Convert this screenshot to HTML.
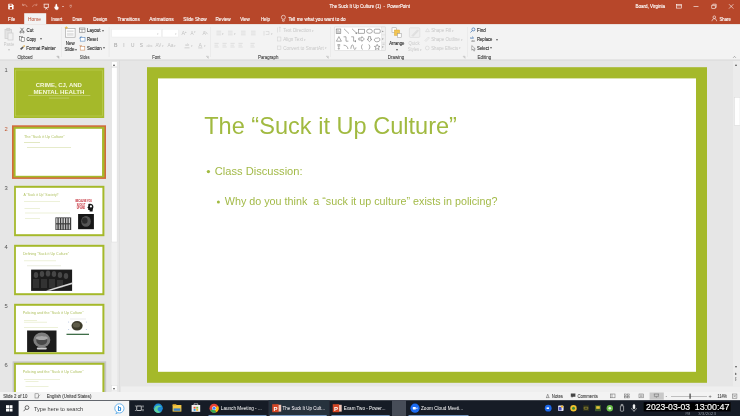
<!DOCTYPE html>
<html><head><meta charset="utf-8"><title>The Suck It Up Culture (1) - PowerPoint</title>
<style>
html,body{margin:0;padding:0;background:#E6E6E6;overflow:hidden}
svg{display:block;font-family:"Liberation Sans",sans-serif}
text{white-space:pre}
</style></head><body>
<svg width="740" height="416" viewBox="0 0 740 416">
<defs><filter id="soft" filterUnits="userSpaceOnUse" x="-10" y="-10" width="760" height="436"><feGaussianBlur stdDeviation="0.45"/></filter></defs>
<g filter="url(#soft)">
<rect x="-10" y="-10" width="760" height="436" fill="#E6E6E6" />
<rect x="-10" y="-10" width="760" height="34.3" fill="#B7472A" />
<rect x="-10" y="24.3" width="760" height="35.5" fill="#F3F3F3" />
<rect x="-10" y="59.6" width="760" height="0.8" fill="#d4d4d4" />
<text x="329.5" y="7.9" font-size="4.9" fill="#fff" textLength="80.5" lengthAdjust="spacingAndGlyphs" stroke="#fff" stroke-width="0.12">The Suck It Up Culture (1)  -  PowerPoint</text>
<text x="635.5" y="7.9" font-size="4.9" fill="#fff" textLength="29.5" lengthAdjust="spacingAndGlyphs" stroke="#fff" stroke-width="0.12">Board, Virginia</text>
<g stroke="#fff" stroke-width="0.6" fill="none"><rect x="676.5" y="4.5" width="5" height="3.6"/><path d="M676.5 5.7h5"/><path d="M693.5 6.5h5"/><rect x="711.8" y="5.2" width="3.4" height="3.2"/><path d="M712.8 5.2v-1h3.4v3.2h-1"/><path d="M729 4.2l4.4 4.4M733.4 4.2l-4.4 4.4"/></g>
<g fill="none" stroke="#fff" stroke-width="0.7"><path d="M8.6 4.2h3.6l1 1v3.9h-4.6z" fill="#fff"/><rect x="9.6" y="4.4" width="2" height="1.4" fill="#B7472A" stroke="none"/><rect x="9.8" y="7" width="2.2" height="2" fill="#B7472A" stroke="none"/><path d="M22.5 5.2c2-1 4-.6 4.6 1.8M22.5 5.2l.2-1.5M22.5 5.2l1.6.4" stroke="#e0a595"/><path d="M37 5.2c-2-1-4-.6-4.600 1.800M37 5.200l-.2-1.500M37 5.200l-1.600.4" stroke="#d98f7d"/><path d="M43.700 4.200h5.200M44.200 4.200v3.400h4.200v-3.400M46.300 7.600v1.400M45 9.400l1.300-1 1.300 1" /><path d="M56 4c.8 0 1 .5 1 1.200v1.300l1.300.5v1.600c0 .8-.6 1.200-1.400 1.200s-1.600-.4-2-1.400l-.6-1.500.8.300z" fill="#fff" stroke-width="0.3"/><path d="M62 6l1 1 1-1" stroke-width="0.5"/><path d="M69.600 5.300h2.200M69.900 6.500l.8.900.8-.9" stroke-width="0.5"/></g>
<rect x="24.2" y="13.2" width="22" height="11.2" fill="#F3F3F3" />
<text x="8" y="20.6" font-size="4.9" fill="#fff" textLength="7.2" lengthAdjust="spacingAndGlyphs" stroke="#fff" stroke-width="0.12">File</text>
<text x="51.3" y="20.6" font-size="4.9" fill="#fff" textLength="10.8" lengthAdjust="spacingAndGlyphs" stroke="#fff" stroke-width="0.12">Insert</text>
<text x="72.5" y="20.6" font-size="4.9" fill="#fff" textLength="9.6" lengthAdjust="spacingAndGlyphs" stroke="#fff" stroke-width="0.12">Draw</text>
<text x="93.2" y="20.6" font-size="4.9" fill="#fff" textLength="14.2" lengthAdjust="spacingAndGlyphs" stroke="#fff" stroke-width="0.12">Design</text>
<text x="117.5" y="20.6" font-size="4.9" fill="#fff" textLength="22.2" lengthAdjust="spacingAndGlyphs" stroke="#fff" stroke-width="0.12">Transitions</text>
<text x="149.3" y="20.6" font-size="4.9" fill="#fff" textLength="24.3" lengthAdjust="spacingAndGlyphs" stroke="#fff" stroke-width="0.12">Animations</text>
<text x="183.3" y="20.6" font-size="4.9" fill="#fff" textLength="23.4" lengthAdjust="spacingAndGlyphs" stroke="#fff" stroke-width="0.12">Slide Show</text>
<text x="215.5" y="20.6" font-size="4.9" fill="#fff" textLength="15.2" lengthAdjust="spacingAndGlyphs" stroke="#fff" stroke-width="0.12">Review</text>
<text x="240.2" y="20.6" font-size="4.9" fill="#fff" textLength="9.6" lengthAdjust="spacingAndGlyphs" stroke="#fff" stroke-width="0.12">View</text>
<text x="261" y="20.6" font-size="4.9" fill="#fff" textLength="8.8" lengthAdjust="spacingAndGlyphs" stroke="#fff" stroke-width="0.12">Help</text>
<text x="28" y="20.6" font-size="4.9" fill="#B7472A" textLength="13" lengthAdjust="spacingAndGlyphs" >Home</text>
<text x="288.4" y="20.6" font-size="4.9" fill="#fff" textLength="57.3" lengthAdjust="spacingAndGlyphs" stroke="#fff" stroke-width="0.12">Tell me what you want to do</text>
<g fill="none" stroke="#fff" stroke-width="0.6"><circle cx="283.400" cy="17.300" r="2"/><path d="M282.600 19.600v1.600h1.600v-1.600"/></g>
<text x="719.5" y="20.6" font-size="4.9" fill="#fff" textLength="11.4" lengthAdjust="spacingAndGlyphs" stroke="#fff" stroke-width="0.12">Share</text>
<g fill="none" stroke="#fff" stroke-width="0.6"><circle cx="714.300" cy="17.200" r="1.300"/><path d="M712 21.200c0-1.600 1-2.500 2.300-2.500s2.300.9 2.300 2.500"/></g>
<rect x="61.5" y="27" width="0.5" height="30" fill="#e2e2e2" />
<rect x="108.8" y="27" width="0.5" height="30" fill="#e2e2e2" />
<rect x="210.5" y="27" width="0.5" height="30" fill="#e2e2e2" />
<rect x="330.2" y="27" width="0.5" height="30" fill="#e2e2e2" />
<rect x="467" y="27" width="0.5" height="30" fill="#e2e2e2" />
<g fill="none" stroke="#cfcfcf" stroke-width="0.8"><rect x="5" y="29.500" width="6.500" height="9" fill="#e4e4e4"/><rect x="6.800" y="28.300" width="3" height="2" fill="#d8d8d8"/><rect x="8" y="33" width="5" height="7" fill="#f0f0f0"/></g>
<text x="3.8" y="45.6" font-size="4.9" fill="#c6c6c6" textLength="10.5" lengthAdjust="spacingAndGlyphs" >Paste</text>
<text x="7.8" y="50.6" font-size="4" fill="#c6c6c6" >▾</text>
<g fill="none" stroke="#444" stroke-width="0.6"><path d="M20.500 27.800l3 3.600M23.500 27.800l-3 3.600"/><circle cx="20.600" cy="32.100" r=".8"/><circle cx="23.400" cy="32.100" r=".8"/></g>
<text x="26.4" y="31.7" font-size="4.9" fill="#262626" textLength="7" lengthAdjust="spacingAndGlyphs" stroke="#262626" stroke-width="0.1" >Cut</text>
<g fill="#fff" stroke="#555" stroke-width="0.5"><rect x="19.600" y="36.300" width="3" height="3.800"/><rect x="21.200" y="37.600" width="3" height="3.800"/></g>
<text x="26.4" y="40.7" font-size="4.9" fill="#262626" textLength="9.8" lengthAdjust="spacingAndGlyphs" stroke="#262626" stroke-width="0.1" >Copy</text>
<text x="40" y="40.4" font-size="3.6" fill="#666" >▾</text>
<g><path d="M20 48.800l2.600-2.400 1.200 1.200-2.600 2.400z" fill="#555"/><path d="M22.800 46.200l1.400-1.300 1 1-1.300 1.400z" fill="#e0b050"/></g>
<text x="26.2" y="49.6" font-size="4.9" fill="#262626" textLength="29.6" lengthAdjust="spacingAndGlyphs" stroke="#262626" stroke-width="0.1" >Format Painter</text>
<text x="17.4" y="58.8" font-size="4.9" fill="#444" textLength="15.2" lengthAdjust="spacingAndGlyphs" stroke="#444" stroke-width="0.1" >Clipboard</text>
<path d="M56.800 56.300h2v2M58.800 58.300l-1.700-1.700" stroke="#777" stroke-width="0.4" fill="none"/>
<g><rect x="65.300" y="28.600" width="9.800" height="8.600" fill="#fff" stroke="#999" stroke-width="0.6"/><rect x="66.800" y="30.600" width="6.800" height="1" fill="#c9c9c9"/><rect x="66.800" y="32.800" width="6.800" height="3" fill="#e3e3e3"/><path d="M64.800 27.600h3M66.300 26.300v2.800" stroke="#e8b84a" stroke-width="0.9"/></g>
<text x="65.8" y="45" font-size="4.9" fill="#262626" textLength="8.8" lengthAdjust="spacingAndGlyphs" stroke="#262626" stroke-width="0.1" >New</text>
<text x="64.4" y="51.2" font-size="4.9" fill="#262626" textLength="10" lengthAdjust="spacingAndGlyphs" stroke="#262626" stroke-width="0.1" >Slide</text>
<text x="75" y="51" font-size="3.6" fill="#666" >▾</text>
<g fill="#fff" stroke="#666" stroke-width="0.5"><rect x="79.600" y="28" width="5.400" height="4.200"/><path d="M79.600 29.300h5.400M82 29.300v2.900"/></g>
<text x="87" y="31.7" font-size="4.9" fill="#262626" textLength="13.6" lengthAdjust="spacingAndGlyphs" stroke="#262626" stroke-width="0.1" >Layout</text>
<text x="101.6" y="31.5" font-size="3.6" fill="#666" >▾</text>
<g fill="#fff" stroke="#3a73b5" stroke-width="0.5"><rect x="80.200" y="37.300" width="4.800" height="3.800"/><path d="M79.400 38.600c.4-1.600 1.600-2 2.800-1.800" fill="none"/></g>
<text x="87" y="40.7" font-size="4.9" fill="#262626" textLength="10.8" lengthAdjust="spacingAndGlyphs" stroke="#262626" stroke-width="0.1" >Reset</text>
<g fill="#fff" stroke="#c87f4a" stroke-width="0.5"><rect x="80.200" y="46.300" width="4.600" height="3.800"/><path d="M79.400 45.600h2.600"/></g>
<text x="87" y="49.6" font-size="4.9" fill="#262626" textLength="14.6" lengthAdjust="spacingAndGlyphs" stroke="#262626" stroke-width="0.1" >Section</text>
<text x="102.6" y="49.4" font-size="3.6" fill="#666" >▾</text>
<text x="79.8" y="58.8" font-size="4.9" fill="#444" textLength="9.6" lengthAdjust="spacingAndGlyphs" stroke="#444" stroke-width="0.1" >Slides</text>
<rect x="111.8" y="29.2" width="49.6" height="7.8" fill="#fff" stroke="#e6e6e6" stroke-width="0.4"/>
<rect x="162.3" y="29.2" width="16.2" height="7.8" fill="#fff" stroke="#e6e6e6" stroke-width="0.4"/>
<text x="157.3" y="34.8" font-size="3.4" fill="#cfcfcf" >▾</text>
<text x="174.6" y="34.8" font-size="3.4" fill="#cfcfcf" >▾</text>
<text x="181.6" y="35" font-size="5.4" fill="#c4c4c4" >A</text>
<text x="185.2" y="32.8" font-size="2.6" fill="#c4c4c4" >▴</text>
<text x="190.6" y="35" font-size="4.6" fill="#c4c4c4" >A</text>
<text x="193.6" y="32.8" font-size="2.6" fill="#c4c4c4" >▾</text>
<text x="202.6" y="35" font-size="5" fill="#c4c4c4" >A</text>
<path d="M205.300 31.500l2.200 2.600" stroke="#d0d0d0" stroke-width="1"/>
<text x="114" y="47" font-size="4.8" fill="#adadad" font-weight="bold" >B</text>
<text x="123.2" y="47" font-size="4.8" fill="#adadad" >I</text>
<text x="131" y="47" font-size="4.8" fill="#adadad" >U</text>
<text x="139.8" y="47" font-size="4.8" fill="#adadad" >S</text>
<text x="146.4" y="46.8" font-size="4.2" fill="#c4c4c4" textLength="6.4" lengthAdjust="spacingAndGlyphs" >abc</text>
<text x="155.6" y="47" font-size="4.8" fill="#c4c4c4" textLength="5.6" lengthAdjust="spacingAndGlyphs" >AV</text>
<text x="162.4" y="46.8" font-size="3" fill="#c4c4c4" >▾</text>
<text x="167.6" y="47" font-size="4.8" fill="#c4c4c4" textLength="6" lengthAdjust="spacingAndGlyphs" >Aa</text>
<text x="174.4" y="46.8" font-size="3" fill="#c4c4c4" >▾</text>
<path d="M184.500 47.800h5" stroke="#d6d6d6" stroke-width="1.2"/>
<text x="185.2" y="46.2" font-size="4" fill="#c4c4c4" textLength="4" lengthAdjust="spacingAndGlyphs" >ab</text>
<text x="191" y="46.8" font-size="3" fill="#c4c4c4" >▾</text>
<text x="198.6" y="46.6" font-size="5.2" fill="#c4c4c4" >A</text>
<path d="M198.200 47.900h4.200" stroke="#d6d6d6" stroke-width="1.2"/>
<text x="204" y="46.8" font-size="3" fill="#c4c4c4" >▾</text>
<text x="152.3" y="58.8" font-size="4.9" fill="#444" textLength="8.2" lengthAdjust="spacingAndGlyphs" stroke="#444" stroke-width="0.1" >Font</text>
<path d="M206.300 56.300h2v2M208.300 58.300l-1.700-1.700" stroke="#999" stroke-width="0.4" fill="none"/>
<g stroke="#d3d3d3" stroke-width="0.6" fill="none"><path d="M216.5 31.200h4.600M216.5 33h4.600M216.5 34.800h4.600"/><path d="M228 31.200h4.600M228 33h4.600M228 34.800h4.600"/><path d="M241 31.200h4.600M241 33h4.600M241 34.800h4.600"/><path d="M251 31.200h4.600M251 33h4.600M251 34.800h4.600"/><path d="M214.5 43.400h4.200M214.5 45.200h3.400M214.5 47h4.200"/><path d="M222.5 43.400h4.200M222.5 45.200h3.400M222.5 47h4.200"/><path d="M230.5 43.400h4.200M230.5 45.200h3.400M230.5 47h4.200"/><path d="M238.5 43.400h4.200M238.5 45.200h3.400M238.5 47h4.200"/><path d="M250.5 43.400h4.200M250.5 45.200h3.400M250.5 47h4.200"/><path d="M264 31v4.500M265.800 31.500h3.200v3h-3.200"/></g>
<text x="222.4" y="34.6" font-size="3" fill="#c4c4c4" >▾</text>
<text x="234" y="34.6" font-size="3" fill="#c4c4c4" >▾</text>
<text x="271" y="34.6" font-size="3" fill="#c4c4c4" >▾</text>
<g stroke="#cfcfcf" stroke-width="0.5" fill="none"><path d="M277.500 27.500v5M279 27.800l.8-1 .8 1M279.800 27v5"/><rect x="277.300" y="37" width="3.600" height="4"/><rect x="277.300" y="46" width="3.600" height="3.600"/></g>
<text x="283.2" y="31.7" font-size="4.9" fill="#c8c8c8" textLength="27.8" lengthAdjust="spacingAndGlyphs" >Text Direction</text>
<text x="312" y="31.5" font-size="3.4" fill="#c4c4c4" >▾</text>
<text x="283.2" y="40.7" font-size="4.9" fill="#c8c8c8" textLength="19.8" lengthAdjust="spacingAndGlyphs" >Align Text</text>
<text x="304" y="40.5" font-size="3.4" fill="#c4c4c4" >▾</text>
<text x="283.2" y="49.6" font-size="4.9" fill="#c8c8c8" textLength="40.6" lengthAdjust="spacingAndGlyphs" >Convert to SmartArt</text>
<text x="325" y="49.4" font-size="3.4" fill="#c4c4c4" >▾</text>
<text x="258" y="58.8" font-size="4.9" fill="#444" textLength="20.4" lengthAdjust="spacingAndGlyphs" stroke="#444" stroke-width="0.1" >Paragraph</text>
<path d="M326.300 56.300h2v2M328.300 58.300l-1.700-1.700" stroke="#999" stroke-width="0.4" fill="none"/>
<rect x="334.8" y="27" width="50.6" height="23.4" fill="#fff" stroke="#d4d4d4" stroke-width="0.5"/>
<rect x="381.6" y="27" width="3.8" height="23.4" fill="#f0f0f0" stroke="#d4d4d4" stroke-width="0.4"/>
<path d="M381.600 34.800h3.800M381.600 42.600h3.800" stroke="#d4d4d4" stroke-width="0.400"/>
<text x="382.3" y="32.4" font-size="2.8" fill="#888" >▴</text>
<text x="382.3" y="40.2" font-size="2.8" fill="#888" >▾</text>
<text x="382.3" y="48.4" font-size="2.8" fill="#888" >▾</text>
<path d="M382.400 44.200h2.200" stroke="#888" stroke-width="0.400"/>
<g fill="none" stroke="#666" stroke-width="0.55"><rect x="336.200" y="29" width="4.600" height="4.400"/><path d="M337 30.200h2M337 31.400h3M337 32.600h3" stroke-width="0.35"/><path d="M344 28.800l5 4.800"/><path d="M352 28.800l5 4.800M357 33.600l-.2-1.600M357 33.600l-1.600-.2"/><rect x="358.600" y="29.200" width="6" height="4"/><ellipse cx="369.500" cy="31.200" rx="2.900" ry="2.100"/><rect x="374.200" y="29.200" width="6" height="4" rx="1"/><path d="M336.400 41.200l2.500-4.600 2.500 4.600z"/><path d="M343.600 36.800h2.400v4.400h2.400"/><path d="M351.200 36.800h2.400v4.400h2.400M356 41.200l-1-.9M356 41.200l-1 .9"/><path d="M358.800 38h3v-1.400l2.600 2.400-2.600 2.400v-1.400h-3z"/><path d="M368.400 36.600h2.200v2.600h1.400l-2.500 2.400-2.500-2.400h1.400z"/><path d="M375 41.200c-1.600-1.600.4-3.800 2-2.800 1.400-1.400 3.600 0 2.600 1.600.8 1.200-2.600 2.600-4.600 1.200z"/><path d="M337.400 44.600h2.800M337.400 45.800h2.800M338.800 46v3.200M338 48.300l.8 1 .8-1"/><path d="M343.600 45.200c2.400 0 4 1.400 4.400 3.800"/><path d="M350.800 48.800c.8-5 2-5 2.800-1.600s1.800 2.600 2.400.2"/><path d="M362.600 44.600c-1.400 0-.4 2.200-1.600 2.400 1.200.2.200 2.400 1.600 2.400"/><path d="M368.600 44.600c1.400 0 .4 2.200 1.600 2.400-1.200.2-.2 2.400-1.600 2.400"/><path d="M377.200 44.400l.8 1.800 2 .2-1.500 1.300.5 1.900-1.800-1-1.800 1 .5-1.900-1.500-1.300 2-.2z"/></g>
<g stroke-width="0.5"><rect x="392" y="27.800" width="4.600" height="4.600" fill="#fff" stroke="#999"/><rect x="394.400" y="30" width="5.200" height="5.400" fill="#f1c453" stroke="#d9a93a"/><rect x="397.600" y="33.600" width="3.600" height="4" fill="#fff" stroke="#999"/></g>
<text x="389.2" y="45" font-size="4.9" fill="#262626" textLength="15.2" lengthAdjust="spacingAndGlyphs" stroke="#262626" stroke-width="0.1" >Arrange</text>
<text x="395.6" y="51" font-size="3.6" fill="#666" >▾</text>
<g stroke="#d6d6d6" stroke-width="0.6" fill="#efefef"><rect x="409.400" y="27.800" width="10.400" height="9.600" rx="1"/><path d="M412 35.400l5.500-5.600 1 1-5.500 5.600z" fill="#e2e2e2"/></g>
<text x="408.6" y="45" font-size="4.9" fill="#cacaca" textLength="11" lengthAdjust="spacingAndGlyphs" >Quick</text>
<text x="407.8" y="51.2" font-size="4.9" fill="#cacaca" textLength="11.4" lengthAdjust="spacingAndGlyphs" >Styles</text>
<text x="419.8" y="51" font-size="3.4" fill="#c4c4c4" >▾</text>
<g stroke="#cdcdcd" stroke-width="0.5" fill="none"><path d="M425.500 31.600l2-3 2 3z"/><path d="M425 40.400l3.400-3.400 1 1-3.400 3.400z"/><circle cx="427.300" cy="48" r="1.900"/></g>
<text x="431.2" y="31.7" font-size="4.9" fill="#c8c8c8" textLength="20" lengthAdjust="spacingAndGlyphs" >Shape Fill</text>
<text x="452.4" y="31.5" font-size="3.4" fill="#c4c4c4" >▾</text>
<text x="431.2" y="40.7" font-size="4.9" fill="#c8c8c8" textLength="28.6" lengthAdjust="spacingAndGlyphs" >Shape Outline</text>
<text x="461" y="40.5" font-size="3.4" fill="#c4c4c4" >▾</text>
<text x="431.2" y="49.6" font-size="4.9" fill="#c8c8c8" textLength="27" lengthAdjust="spacingAndGlyphs" >Shape Effects</text>
<text x="459.4" y="49.4" font-size="3.4" fill="#c4c4c4" >▾</text>
<text x="387.8" y="58.8" font-size="4.9" fill="#444" textLength="16.6" lengthAdjust="spacingAndGlyphs" stroke="#444" stroke-width="0.1" >Drawing</text>
<path d="M463 56.300h2v2M465 58.300l-1.700-1.700" stroke="#999" stroke-width="0.4" fill="none"/>
<g fill="none" stroke="#3a6fb0" stroke-width="0.7"><circle cx="473.400" cy="29.400" r="1.500"/><path d="M472.300 30.600l-1.800 1.900"/></g>
<text x="477" y="31.7" font-size="4.9" fill="#262626" textLength="8.8" lengthAdjust="spacingAndGlyphs" stroke="#262626" stroke-width="0.1" >Find</text>
<g fill="#3a6fb0"><text x="470" y="39.400" font-size="3.400" fill="#3a6fb0">ab</text><text x="471.600" y="42.400" font-size="3.400" fill="#555">ac</text></g>
<text x="477" y="40.7" font-size="4.9" fill="#262626" textLength="15.4" lengthAdjust="spacingAndGlyphs" stroke="#262626" stroke-width="0.1" >Replace</text>
<text x="496.2" y="40.5" font-size="3.6" fill="#666" >▾</text>
<path d="M471.800 45.600v4.600l1.200-1 .9 1.900.8-.4-.9-1.800h1.500z" fill="#fff" stroke="#555" stroke-width="0.45"/>
<text x="477" y="49.6" font-size="4.9" fill="#262626" textLength="12" lengthAdjust="spacingAndGlyphs" stroke="#262626" stroke-width="0.1" >Select</text>
<text x="489.6" y="49.4" font-size="3.6" fill="#666" >▾</text>
<text x="477.4" y="58.8" font-size="4.9" fill="#444" textLength="13.8" lengthAdjust="spacingAndGlyphs" stroke="#444" stroke-width="0.1" >Editing</text>
<path d="M733.100 57.800l1.400-1.400 1.400 1.400" stroke="#666" stroke-width="0.5" fill="none"/>
<rect x="111.5" y="61" width="5.8" height="331" fill="#f0f0f0" />
<rect x="111.7" y="67.5" width="5.4" height="174.5" fill="#fff" stroke="#d8d8d8" stroke-width="0.4"/>
<rect x="111.7" y="61.8" width="5.4" height="5" fill="#fff" stroke="#d8d8d8" stroke-width="0.4"/>
<text x="112.8" y="65.8" font-size="3.6" fill="#555" >▴</text>
<rect x="111.7" y="385.4" width="5.4" height="5.4" fill="#fff" stroke="#d8d8d8" stroke-width="0.4"/>
<text x="112.8" y="389.6" font-size="3.6" fill="#555" >▾</text>
<rect x="119.2" y="60.4" width="0.5" height="331.6" fill="#d6d6d6" />
<text x="4.6" y="71.8" font-size="5.8" fill="#555" >1</text>
<text x="4.6" y="130.8" font-size="5.8" fill="#c2572f" >2</text>
<text x="4.6" y="189.8" font-size="5.8" fill="#555" >3</text>
<text x="4.6" y="248.8" font-size="5.8" fill="#555" >4</text>
<text x="4.6" y="307.8" font-size="5.8" fill="#555" >5</text>
<text x="4.6" y="366.8" font-size="5.8" fill="#555" >6</text>
<rect x="14" y="67.8" width="90.2" height="50.2" fill="#A5B92C" />
<rect x="15.6" y="70" width="87" height="46" fill="none" stroke="#c6d662" stroke-width="0.5"/>
<text x="35.8" y="86.9" font-size="5.7" fill="#f6f8dc" textLength="46" lengthAdjust="spacingAndGlyphs" font-weight="bold" >CRIME, CJ, AND</text>
<text x="33.5" y="93.8" font-size="5.7" fill="#f6f8dc" textLength="50.8" lengthAdjust="spacingAndGlyphs" font-weight="bold" >MENTAL HEALTH</text>
<rect x="28.3" y="95.2" width="62" height="0.4" fill="#dfe6a8" />
<rect x="49" y="97.8" width="20" height="0.5" fill="#cdd78a" />
<rect x="12" y="125.3" width="94" height="53.6" fill="#d2693c" />
<rect x="13.6" y="126.8" width="90.9" height="50.6" fill="#A5B92C" />
<rect x="15.6" y="128.8" width="86.45" height="47" fill="#fff" />
<text x="24" y="137.8" font-size="3.5" fill="#b0c262" textLength="40.6" lengthAdjust="spacingAndGlyphs" >The “Suck it Up Culture”</text>
<rect x="24" y="142.4" width="16" height="0.5" fill="#c5d184" />
<rect x="27" y="147.5" width="44" height="0.5" fill="#cdd794" />
<rect x="14.1" y="185.8" width="90.3" height="50.4" fill="#A5B92C" />
<rect x="15.9" y="187.8" width="86.5" height="46.4" fill="#fff" />
<text x="23.5" y="196.3" font-size="3.5" fill="#b0c262" textLength="35" lengthAdjust="spacingAndGlyphs" >A “Suck it Up” Society?</text>
<rect x="24" y="201.6" width="36" height="0.4" fill="#d2dba0" />
<rect x="24.5" y="208.1" width="15.5" height="0.4" fill="#d2dba0" />
<rect x="25" y="212.8" width="45" height="0.4" fill="#d2dba0" />
<rect x="25" y="218" width="15" height="0.4" fill="#d2dba0" />
<text x="75.4" y="201.7" font-size="2.7" fill="#c0222e" textLength="16.5" lengthAdjust="spacingAndGlyphs" font-weight="bold" >BECAUSE YOU</text>
<text x="76.7" y="205.8" font-size="2.6" fill="#c0222e" textLength="8.5" lengthAdjust="spacingAndGlyphs" font-weight="bold" >SUCK IT</text>
<text x="76.7" y="209.4" font-size="2.6" fill="#c0222e" textLength="8.5" lengthAdjust="spacingAndGlyphs" font-weight="bold" >UP AND</text>
<path d="M88.400 204c2.400-1 5 .2 5 2.800 0 1.400-.8 2.200-.8 4.600h-3v-1.400h-1.400v-1.800l-.9-.4 1-1.600c0-.9 0-1.600.1-2.200z" fill="#151515"/><circle cx="90.900" cy="206.400" r="1.100" fill="#fff"/>
<rect x="55.4" y="217.4" width="15.8" height="12.6" fill="#3c3c3c" />
<rect x="56.2" y="218.2" width="1.3" height="5" fill="#d8d8d8" />
<rect x="56.2" y="224.4" width="1.3" height="5" fill="#bdbdbd" />
<rect x="58.7" y="218.2" width="1.3" height="5" fill="#d8d8d8" />
<rect x="58.7" y="224.4" width="1.3" height="5" fill="#bdbdbd" />
<rect x="61.2" y="218.2" width="1.3" height="5" fill="#d8d8d8" />
<rect x="61.2" y="224.4" width="1.3" height="5" fill="#bdbdbd" />
<rect x="63.7" y="218.2" width="1.3" height="5" fill="#d8d8d8" />
<rect x="63.7" y="224.4" width="1.3" height="5" fill="#bdbdbd" />
<rect x="66.2" y="218.2" width="1.3" height="5" fill="#d8d8d8" />
<rect x="66.2" y="224.4" width="1.3" height="5" fill="#bdbdbd" />
<rect x="68.7" y="218.2" width="1.3" height="5" fill="#d8d8d8" />
<rect x="68.7" y="224.4" width="1.3" height="5" fill="#bdbdbd" />
<rect x="78.1" y="214" width="15.8" height="15.2" fill="#161616" />
<ellipse cx="86" cy="221.400" rx="4.800" ry="5.400" fill="#555"/><ellipse cx="84.800" cy="220.600" rx="2.800" ry="3.200" fill="#2c2c2c"/>
<rect x="14.1" y="244.8" width="90.3" height="50.4" fill="#A5B92C" />
<rect x="15.9" y="246.8" width="86.5" height="46.4" fill="#fff" />
<text x="23" y="255" font-size="3.5" fill="#b0c262" textLength="46" lengthAdjust="spacingAndGlyphs" >Defining “Suck it Up Culture”</text>
<rect x="24" y="260.7" width="32" height="0.4" fill="#d2dba0" />
<rect x="27" y="265.7" width="34" height="0.4" fill="#c9cfb0" />
<rect x="31.1" y="269.6" width="41" height="21.3" fill="#1f1f1f" />
<g fill="#474747"><ellipse cx="36" cy="275" rx="2.200" ry="3"/><ellipse cx="42" cy="274" rx="2.200" ry="3"/><ellipse cx="48" cy="273.500" rx="2.200" ry="3"/><ellipse cx="54" cy="274" rx="2.200" ry="3"/><ellipse cx="60" cy="275" rx="2.200" ry="3"/><ellipse cx="66" cy="276" rx="2.200" ry="3"/></g><g fill="#333"><rect x="33" y="279" width="6" height="9"/><rect x="41" y="279" width="6" height="9"/><rect x="49" y="279" width="6" height="9"/><rect x="57" y="280" width="6" height="8"/></g><path d="M46 290.600l26-8v1.600l-22 6.600z" fill="#d9d9d9"/>
<rect x="14.1" y="303.8" width="90.3" height="50.4" fill="#A5B92C" />
<rect x="15.9" y="305.8" width="86.5" height="46.4" fill="#fff" />
<text x="22.8" y="314.2" font-size="3.5" fill="#b0c262" textLength="60.6" lengthAdjust="spacingAndGlyphs" >Policing and the “Suck it Up Culture”</text>
<rect x="24" y="320" width="13" height="0.4" fill="#d2dba0" />
<rect x="24" y="321.9" width="23" height="0.4" fill="#d2dba0" />
<rect x="24" y="327.5" width="34" height="0.4" fill="#d2dba0" />
<rect x="27.1" y="330.5" width="29.4" height="21.5" fill="#1c1c1c" />
<ellipse cx="41.800" cy="340" rx="8.500" ry="7.500" fill="#7e7e7e"/><ellipse cx="41.800" cy="340.500" rx="5.500" ry="4.500" fill="#4a4a4a"/><ellipse cx="41.800" cy="338" rx="6" ry="2" fill="#a8a8a8"/><rect x="36.800" y="347.400" width="10" height="2.200" rx="1" fill="#d0d0d0"/>
<rect x="70" y="318.8" width="16" height="0.4" fill="#cfcfcf" />
<ellipse cx="77.100" cy="325.800" rx="5.600" ry="4.800" fill="#3d3b2c"/><ellipse cx="76.500" cy="325" rx="3.600" ry="2.600" fill="#5e5c48"/><circle cx="68.600" cy="322" r=".6" fill="#b9c6e0"/><circle cx="86.400" cy="322" r=".6" fill="#b9c6e0"/><circle cx="68.600" cy="329.500" r=".6" fill="#b9c6e0"/><circle cx="86.400" cy="329.500" r=".6" fill="#b9c6e0"/>
<rect x="66.5" y="333.7" width="22.5" height="1.3" fill="#3f6e4a" />
<rect x="12.6" y="361.3" width="93.6" height="31" fill="#c8c8c8" />
<rect x="14.1" y="362.8" width="90.3" height="29.6" fill="#A5B92C" />
<rect x="15.9" y="364.8" width="86.5" height="27.7" fill="#fff" />
<text x="22.8" y="373.2" font-size="3.5" fill="#b0c262" textLength="60.6" lengthAdjust="spacingAndGlyphs" >Policing and the “Suck it Up Culture”</text>
<rect x="24" y="379.2" width="36" height="0.4" fill="#d2dba0" />
<rect x="25.5" y="381" width="13" height="0.4" fill="#d2dba0" />
<rect x="25.5" y="386.3" width="23" height="0.4" fill="#d2dba0" />
<rect x="147" y="67.2" width="560" height="315.6" fill="#A5B92C" />
<rect x="158" y="78.4" width="538" height="293.4" fill="#fff" />
<text x="204.2" y="134" font-size="23.8" fill="#A1BA40" textLength="252.8" lengthAdjust="spacingAndGlyphs" >The “Suck it Up Culture”</text>
<circle cx="208.400" cy="171.600" r="1.650" fill="#A1BA40"/>
<text x="214.8" y="175" font-size="11.2" fill="#a3ba48" textLength="87.8" lengthAdjust="spacingAndGlyphs" >Class Discussion:</text>
<circle cx="218.400" cy="201.900" r="1.500" fill="#A1BA40"/>
<text x="224.8" y="205.2" font-size="10.8" fill="#a3ba48" textLength="272.6" lengthAdjust="spacingAndGlyphs" >Why do you think  a “suck it up culture” exists in policing?</text>
<rect x="733" y="61" width="7" height="325.4" fill="#ececec" />
<rect x="734.6" y="97.3" width="5.4" height="27.9" fill="#fff" stroke="#d6d6d6" stroke-width="0.4"/>
<text x="735.2" y="65.6" font-size="3.8" fill="#555" >▴</text>
<text x="735.2" y="367.8" font-size="3.8" fill="#555" >▾</text>
<text x="735.4" y="373.6" font-size="3" fill="#555" >▴</text>
<text x="735.4" y="375.2" font-size="3" fill="#555" >▴</text>
<text x="735.4" y="379.4" font-size="3" fill="#555" >▾</text>
<text x="735.4" y="381" font-size="3" fill="#555" >▾</text>
<rect x="-10" y="392" width="760" height="8.2" fill="#F3F3F3" />
<rect x="121" y="386.4" width="619" height="5.6" fill="#efefef" />
<text x="3.2" y="398" font-size="4.7" fill="#444" textLength="24.2" lengthAdjust="spacingAndGlyphs" stroke="#444" stroke-width="0.1" >Slide 2 of 10</text>
<g fill="none" stroke="#666" stroke-width="0.5"><rect x="35" y="393.800" width="3.600" height="4.200"/><path d="M37.600 397.400l2.400-2.600"/></g>
<text x="46.7" y="398" font-size="4.7" fill="#444" textLength="44.7" lengthAdjust="spacingAndGlyphs" stroke="#444" stroke-width="0.1" >English (United States)</text>
<g fill="none" stroke="#555" stroke-width="0.5"><path d="M546 397.600h3.400M546.400 397.600l1.300-3.400 1.300 3.400"/></g>
<text x="551.8" y="398" font-size="4.7" fill="#444" textLength="11.2" lengthAdjust="spacingAndGlyphs" stroke="#444" stroke-width="0.1" >Notes</text>
<path d="M570.800 393.600h4.600v3.200h-2.600l-1 1.200v-1.200h-1z" fill="#444"/>
<text x="577.4" y="398" font-size="4.7" fill="#444" textLength="20.5" lengthAdjust="spacingAndGlyphs" stroke="#444" stroke-width="0.1" >Comments</text>
<rect x="649.6" y="392.5" width="14.2" height="7.2" fill="#c8c8c8" />
<g fill="none" stroke="#666" stroke-width="0.5"><rect x="610.400" y="394" width="4.600" height="3.800"/><path d="M612 394v3.800"/><rect x="624.600" y="394" width="1.800" height="1.500"/><rect x="627.400" y="394" width="1.800" height="1.500"/><rect x="624.600" y="396.400" width="1.800" height="1.500"/><rect x="627.400" y="396.400" width="1.800" height="1.500"/><rect x="639" y="394" width="4.600" height="3.800"/><path d="M640 395.200h2.600M640 396.400h2.600"/><path d="M653.800 394h5.200M654.400 394v2.600h4v-2.600M656.400 396.600v1.200"/></g>
<rect x="671" y="396" width="36" height="0.5" fill="#8a8a8a" />
<text x="665.6" y="397.8" font-size="5.4" fill="#555" >-</text>
<text x="708.4" y="398" font-size="5.4" fill="#555" >+</text>
<rect x="689.4" y="393.6" width="1.4" height="5.2" fill="#555" />
<text x="717.6" y="398" font-size="4.5" fill="#444" textLength="9.4" lengthAdjust="spacingAndGlyphs" stroke="#444" stroke-width="0.1" >114%</text>
<g fill="none" stroke="#666" stroke-width="0.5"><rect x="732.300" y="394" width="4.600" height="4.200"/><path d="M733.400 395.200l2.400 1.800M735.800 395.200l-2.400 1.800"/></g>
<rect x="-10" y="400.2" width="760" height="25.8" fill="#151b25" />
<g fill="#fff"><rect x="6" y="405.200" width="3" height="2.900"/><rect x="9.500" y="405.200" width="3" height="2.900"/><rect x="6" y="408.600" width="3" height="2.900"/><rect x="9.500" y="408.600" width="3" height="2.900"/></g>
<rect x="18.6" y="400.8" width="110.6" height="25.2" fill="#f4f4f4" />
<g fill="none" stroke="#333" stroke-width="0.7"><circle cx="27" cy="407.600" r="1.900"/><path d="M25.600 409l-2 2.200"/></g>
<text x="34" y="410.6" font-size="5.7" fill="#3a3a3a" textLength="49.2" lengthAdjust="spacingAndGlyphs" >Type here to search</text>
<circle cx="119.400" cy="408.400" r="4.600" fill="#fff" stroke="#4aa3e8" stroke-width="0.8"/><path d="M116.200 412.200l-.8 2 2.400-1z" fill="#4aa3e8"/>
<text x="117.4" y="410.6" font-size="6.4" fill="#1a7fd4" font-weight="bold" >b</text>
<g fill="none" stroke="#fff" stroke-width="0.7"><rect x="136.800" y="406" width="4.400" height="4.600"/><path d="M143 405.400v2M143 409v2.200M135.400 405.600v.8M135.400 410.200v.8"/></g>
<circle cx="158.200" cy="408.200" r="4.600" fill="#1f8ad6"/><path d="M154 409.800c.6-4 4.800-5.400 7.600-3-2.800-.5-4.200 1-4 2.800.2 1.600 2.200 2.600 4.200 1.900-2.400 2.400-6.800 1.600-7.800-1.700z" fill="#5fd1a0"/>
<rect x="172.600" y="405" width="8.800" height="6.600" fill="#f2c744"/><rect x="172.600" y="404.200" width="3.800" height="1.400" fill="#e0a82e"/><rect x="173.600" y="408.400" width="6.800" height="2.400" fill="#3b7fc4"/>
<rect x="191.600" y="405" width="8.600" height="6.800" fill="#f1f1f1"/><path d="M194 405v-1.200h3.800v1.200" stroke="#f1f1f1" stroke-width="0.6" fill="none"/><rect x="193.600" y="406.800" width="2" height="1.800" fill="#e8503a"/><rect x="196.200" y="406.800" width="2" height="1.800" fill="#7cbb42"/><rect x="193.600" y="409" width="2" height="1.800" fill="#2fa4e7"/><rect x="196.200" y="409" width="2" height="1.800" fill="#f7b928"/>
<g transform="translate(214.100 408.300) scale(1.18)"><circle r="3.900" fill="#e94235"/><path d="M0 0l-3.400 1.950a3.900 3.900 0 0 0 5.350 1.430z" fill="#35a853"/><path d="M0 0l1.950 3.380a3.900 3.900 0 0 0 1.430-5.330z" fill="#fbbc04"/><circle r="1.700" fill="#fff"/><circle r="1.300" fill="#4285f4"/></g>
<text x="220.8" y="410" font-size="4.6" fill="#fff" textLength="41" lengthAdjust="spacingAndGlyphs" >Launch Meeting - ...</text>
<rect x="268.4" y="400.2" width="61.2" height="15.8" fill="#28313e" />
<rect x="275.8" y="404.800" width="5.400" height="6.800" fill="#f0c9bc"/><rect x="272.2" y="404.200" width="6.400" height="8" fill="#d24726"/>
<text x="273.40000000000003" y="410.6" font-size="6" fill="#fff" font-weight="bold" >P</text>
<text x="282.5" y="410" font-size="4.6" fill="#fff" textLength="42.4" lengthAdjust="spacingAndGlyphs" >The Suck It Up Cult...</text>
<rect x="336.3" y="404.800" width="5.400" height="6.800" fill="#f0c9bc"/><rect x="332.7" y="404.200" width="6.400" height="8" fill="#d24726"/>
<text x="333.90000000000003" y="410.6" font-size="6" fill="#fff" font-weight="bold" >P</text>
<text x="343.8" y="410" font-size="4.6" fill="#fff" textLength="41.6" lengthAdjust="spacingAndGlyphs" >Exam Two - Power...</text>
<rect x="392" y="400.2" width="14" height="15.8" fill="#474d59" />
<circle cx="415" cy="408.200" r="4.600" fill="#1d6cf2"/><rect x="412.800" y="407" width="3" height="2.400" rx=".5" fill="#fff"/><path d="M416 408.200l1.400-1v2z" fill="#fff"/>
<text x="421" y="410" font-size="4.6" fill="#fff" textLength="42" lengthAdjust="spacingAndGlyphs" >Zoom Cloud Meeti...</text>
<rect x="208.5" y="415.2" width="58" height="0.8" fill="#8fb8e8" />
<rect x="269.7" y="415.2" width="57" height="0.8" fill="#8fb8e8" />
<rect x="331.4" y="415.2" width="58.3" height="0.8" fill="#8fb8e8" />
<rect x="408.5" y="415.2" width="60" height="0.8" fill="#8fb8e8" />
<circle cx="548.200" cy="408.200" r="3.400" fill="#1a66e8"/><rect x="546.600" y="407.400" width="2.400" height="1.600" fill="#fff"/>
<rect x="558" y="405.400" width="5.600" height="5.600" rx="1" fill="#e9e9f4"/><rect x="558.600" y="407" width="3" height="3.400" fill="#4b53bc"/><circle cx="562" cy="406.600" r="1.200" fill="#f0b429"/>
<circle cx="573.500" cy="408.200" r="3.200" fill="#f2c12e"/><circle cx="573.500" cy="408.200" r="1.500" fill="#3c8a3c"/>
<rect x="583" y="405.200" width="6" height="6" fill="#2a2f1e"/><path d="M584.200 407.200h3.600v2h-3.600z" fill="none" stroke="#c8b43a" stroke-width="0.5"/>
<rect x="595" y="405.200" width="6" height="6" fill="#3e5a2a"/><rect x="596.200" y="406.200" width="3.600" height="2.600" fill="#e6c63a"/>
<circle cx="609.800" cy="408.200" r="3.200" fill="#6cc04a"/><circle cx="609.800" cy="408.200" r="1.300" fill="#e9f6e2"/>
<g fill="none" stroke="#e8e8e8" stroke-width="0.6"><rect x="620.400" y="405.800" width="3.200" height="5.400" rx=".6"/><path d="M621.200 405.800v-1.400h1.600v1.400"/></g>
<rect x="632.800" y="404.200" width="2.400" height="4.800" rx="1.200" fill="#f2f2f2"/><path d="M631.600 408c0 3.200 4.800 3.200 4.800 0M634 410.400v1.600" stroke="#f2f2f2" stroke-width="0.5" fill="none"/>
<text x="685.4" y="414.6" font-size="3.2" fill="#8a909a" textLength="5" lengthAdjust="spacingAndGlyphs" >PM</text>
<text x="698" y="414.6" font-size="3.2" fill="#8a909a" textLength="18" lengthAdjust="spacingAndGlyphs" >3/3/2023</text>
<rect x="643.7" y="402.2" width="86.9" height="9.2" fill="#000" />
<text x="646.1" y="409.9" font-size="8.4" fill="#fff" textLength="44" lengthAdjust="spacingAndGlyphs" stroke="#fff" stroke-width="0.15">2023-03-03</text>
<text x="694.7" y="409.9" font-size="8.4" fill="#fff" textLength="34.8" lengthAdjust="spacingAndGlyphs" stroke="#fff" stroke-width="0.15">13:00:47</text>
</g>
</svg>
</body></html>
